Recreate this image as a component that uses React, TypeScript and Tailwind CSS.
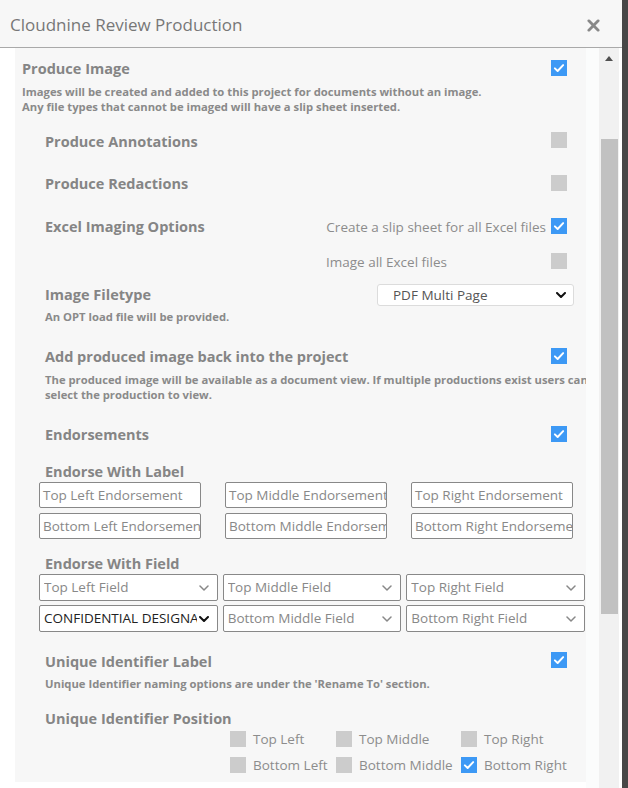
import React from 'react';

const font = { fontFamily: '"Open Sans", "Liberation Sans", sans-serif' };

const Check = ({ on }: { on?: boolean }) =>
  on ? (
    <span className="flex h-[16px] w-[16px] shrink-0 items-center justify-center bg-[#3d99f5]">
      <svg viewBox="0 0 16 16" className="h-[12px] w-[12px]">
        <path d="M2.5 8.5 L6.2 12 L13.5 4.2" fill="none" stroke="white" strokeWidth="2.6" strokeLinecap="round" strokeLinejoin="round" />
      </svg>
    </span>
  ) : (
    <span className="block h-[16px] w-[16px] shrink-0 bg-[#cccccc]" />
  );

const Chevron = ({ dark }: { dark?: boolean }) => (
  <svg viewBox="0 0 10 6" className="h-[6px] w-[10px] shrink-0">
    <path d="M1 1 L5 5 L9 1" fill="none" stroke={dark ? '#111' : '#888'} strokeWidth={dark ? 2 : 1.5} strokeLinecap="round" strokeLinejoin="round" />
  </svg>
);

const FieldSelect = ({ label, selected }: { label: string; selected?: boolean }) => (
  <div className="flex h-[27px] items-center justify-between overflow-hidden rounded-[2px] border border-[#888] bg-white pl-[4px] pr-[8px]">
    <span className={`whitespace-nowrap overflow-hidden text-[13.5px] ${selected ? 'text-[#222]' : 'text-[#888]'}`}>{label}</span>
    <span className="ml-[2px]"><Chevron dark={selected} /></span>
  </div>
);

const LabelInput = ({ label }: { label: string }) => (
  <div className="flex h-[26px] w-[162px] items-center overflow-hidden whitespace-nowrap rounded-[2px] border border-[#888] bg-white pl-[3px] text-[13.5px] text-[#888]">
    {label}
  </div>
);

const Heading = ({ children }: { children: React.ReactNode }) => (
  <span className="text-[14.5px] font-bold leading-[20px] text-[#858585]">{children}</span>
);

const Desc = ({ children }: { children: React.ReactNode }) => (
  <div className="whitespace-nowrap text-[11.25px] font-bold leading-[15px] text-[#8a8a8a]">{children}</div>
);

const PosBox = ({ label, on, w }: { label: string; on?: boolean; w: string }) => (
  <div className={`flex items-center gap-[7px] whitespace-nowrap ${w}`}>
    <Check on={on} />
    <span className="text-[13.5px] leading-[16px] text-[#8c8c8c]">{label}</span>
  </div>
);

export default function App() {
  return (
    <div className="flex h-[788px] w-[628px] bg-[#474747]" style={font}>
      <div className="flex w-[622px] flex-col bg-white">
        {/* header */}
        <div className="flex h-[48px] shrink-0 items-center justify-between border-b border-[#a9a9a9] bg-[#f7f7f7] pl-[10px] pr-[22px] pt-[3px]">
          <span className="text-[17px] text-[#777]">Cloudnine Review Production</span>
          <svg viewBox="0 0 14 14" className="h-[13px] w-[13px]">
            <path d="M2 2 L12 12 M12 2 L2 12" stroke="#888" strokeWidth="3" strokeLinecap="round" />
          </svg>
        </div>

        <div className="flex flex-1 overflow-hidden">
          <div className="w-[15px] shrink-0" />
          {/* content panel */}
          <div className="h-[734px] w-[571px] shrink-0 overflow-hidden bg-[#f7f7f7] pl-[7px] pr-[19px] pt-[11px]">
            <div className="flex h-[20px] items-center justify-between">
              <Heading>Produce Image</Heading>
              <span className="-mt-[3px]"><Check on /></span>
            </div>
            <div className="mt-[5px]">
              <Desc>
                Images will be created and added to this project for documents without an image.
                <br />
                Any file types that cannot be imaged will have a slip sheet inserted.
              </Desc>
            </div>

            <div className="pl-[23px]">
              <div className="mt-[18px] flex h-[20px] items-center justify-between">
                <Heading>Produce Annotations</Heading>
                <span className="-mt-[5px]"><Check /></span>
              </div>
              <div className="mt-[22px] flex h-[20px] items-center justify-between">
                <Heading>Produce Redactions</Heading>
                <span className="-mt-[3px]"><Check /></span>
              </div>
              <div className="mt-[23px] flex h-[20px] items-center justify-between">
                <Heading>Excel Imaging Options</Heading>
                <div className="flex items-center gap-[5px]">
                  <span className="text-[13.5px] text-[#8c8c8c]">Create a slip sheet for all Excel files</span>
                  <span className="-mt-[2px]"><Check on /></span>
                </div>
              </div>
              <div className="mt-[15px] flex h-[20px] items-center justify-end">
                <span className="w-[225px] text-[13.5px] text-[#8c8c8c]">Image all Excel files</span>
                <span className="-mt-[2px]"><Check /></span>
              </div>
              <div className="mt-[12px] flex h-[22px] items-center justify-between">
                <Heading>Image Filetype</Heading>
                <div className="-mr-[7px] flex h-[22px] w-[197px] items-center justify-between rounded-[3px] border border-[#dcdcdc] bg-white pl-[15px] pr-[7px]">
                  <span className="text-[13.5px] text-[#555]">PDF Multi Page</span>
                  <Chevron dark />
                </div>
              </div>
              <div className="mt-[3px]">
                <Desc>An OPT load file will be provided.</Desc>
              </div>

              <div className="mt-[23px] flex h-[20px] items-center justify-between">
                <Heading>Add produced image back into the project</Heading>
                <span className="-mt-[3px]"><Check on /></span>
              </div>
              <div className="mt-[5px] -mr-[30px]">
                <Desc>
                  The produced image will be available as a document view. If multiple productions exist users can
                  <br />
                  select the production to view.
                </Desc>
              </div>

              <div className="mt-[23px] flex h-[20px] items-center justify-between">
                <Heading>Endorsements</Heading>
                <span className="-mt-[3px]"><Check on /></span>
              </div>
              <div className="mt-[17px] flex h-[20px] items-center">
                <Heading>Endorse With Label</Heading>
              </div>
            </div>

            <div className="pl-[17px]">
              <div className="flex w-[534px] justify-between">
                <LabelInput label="Top Left Endorsement" />
                <LabelInput label="Top Middle Endorsement" />
                <LabelInput label="Top Right Endorsement" />
              </div>
              <div className="mt-[5px] flex w-[534px] justify-between">
                <LabelInput label="Bottom Left Endorsement" />
                <LabelInput label="Bottom Middle Endorsement" />
                <LabelInput label="Bottom Right Endorsement" />
              </div>
            </div>

            <div className="pl-[23px]">
              <div className="mt-[15px] flex h-[20px] items-center">
                <Heading>Endorse With Field</Heading>
              </div>
            </div>
            <div className="-mr-[18px] pl-[17px]">
              <div className="grid w-[546px] grid-cols-3 gap-x-[5px] gap-y-[4px]">
                <FieldSelect label="Top Left Field" />
                <FieldSelect label="Top Middle Field" />
                <FieldSelect label="Top Right Field" />
                <FieldSelect label="CONFIDENTIAL DESIGNATION" selected />
                <FieldSelect label="Bottom Middle Field" />
                <FieldSelect label="Bottom Right Field" />
              </div>
            </div>

            <div className="pl-[23px]">
              <div className="mt-[20px] flex h-[20px] items-center justify-between">
                <Heading>Unique Identifier Label</Heading>
                <span className="-mt-[5px]"><Check on /></span>
              </div>
              <div className="mt-[4px]">
                <Desc>Unique Identifier naming options are under the 'Rename To' section.</Desc>
              </div>
              <div className="mt-[18px] flex h-[20px] items-center">
                <Heading>Unique Identifier Position</Heading>
              </div>
            </div>
            <div className="mt-[2px] flex flex-col gap-[10px] pl-[208px]">
              <div className="flex">
                <PosBox label="Top Left" w="w-[106px]" />
                <PosBox label="Top Middle" w="w-[125px]" />
                <PosBox label="Top Right" w="" />
              </div>
              <div className="flex">
                <PosBox label="Bottom Left" w="w-[106px]" />
                <PosBox label="Bottom Middle" w="w-[125px]" />
                <PosBox label="Bottom Right" on w="" />
              </div>
            </div>
          </div>

          {/* gutter + scrollbar */}
          <div className="w-[13px] shrink-0 bg-[#fbfcfc]" />
          <div className="flex h-[741px] w-[20px] shrink-0 flex-col items-center bg-[#f1f1f1]">
            <svg viewBox="0 0 8 5" className="mt-[8px] h-[5px] w-[8px]">
              <path d="M0 5 L4 0 L8 5 Z" fill="#505050" />
            </svg>
            <div className="mt-[78px] h-[475px] w-[17px] bg-[#c1c1c1]" />
          </div>
        </div>
      </div>
    </div>
  );
}
